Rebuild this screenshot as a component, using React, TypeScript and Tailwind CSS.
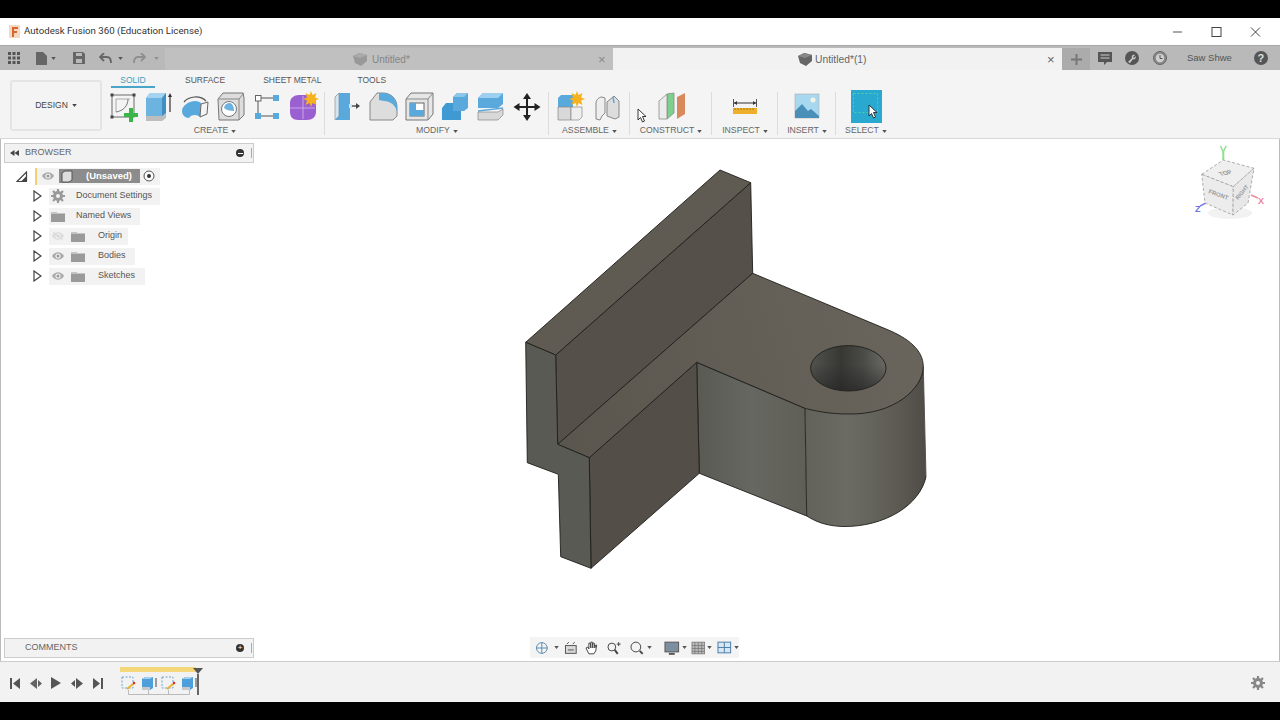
import React from 'react';

const sans = "font-['Liberation_Sans',Arial,sans-serif]";

const Caret = ({ className = 'fill-[#555]' }: { className?: string }) => (
  <svg width="5" height="3" viewBox="0 0 6 4" className={className}>
    <path d="M0 0h6L3 4z" />
  </svg>
);

// 36x36 ribbon icon box
const Ico = ({ children }: { children: React.ReactNode }) => (
  <svg width="36" height="36" viewBox="0 0 36 36" className="shrink-0">
    {children}
  </svg>
);

const SketchIcon = () => (
  <Ico>
    <rect x="7" y="7" width="22" height="22" fill="none" stroke="#777" strokeWidth="1.1" />
    <path d="M11 11v13M11 11h14" stroke="#aaa" fill="none" />
    <path d="M23 11c0 7-5 12-12 13" stroke="#777" fill="none" />
    <g fill="#444">
      <rect x="5.500" y="5.500" width="3" height="3" />
      <rect x="27.500" y="5.500" width="3" height="3" />
      <rect x="5.500" y="27.500" width="3" height="3" />
    </g>
    <path d="M24 20h4v5h5v4h-5v5h-4v-5h-5v-4h5z" fill="#39b54a" />
  </Ico>
);
const ExtrudeIcon = () => (
  <Ico>
    <path d="M5 10l4-5h16v22l-4 4H5z" fill="#6db3e0" />
    <path d="M5 10l4-5h16l-4 5z" fill="#a5d3ef" />
    <path d="M21 10l4-5v22l-4 4z" fill="#3f8fc4" />
    <path d="M5 28h16l4-3v5l-4 3H5z" fill="#bdbdbd" />
    <path d="M29 24V7" stroke="#333" strokeWidth="1.200" />
    <path d="M27 9l2-4 2 4z" fill="#333" />
  </Ico>
);
const RevolveIcon = () => (
  <Ico>
    <path d="M7 14c5-6 16-7 22-1" fill="none" stroke="#555" strokeWidth="1.200" />
    <path d="M5 23c0-6 8-10 13-10 3 0 5 1 6 2l-1 14c-1-1-3-2-5-2-3 0-5 1-6 3-4 0-7-3-7-7z" fill="#5aa9dc" />
    <path d="M24 16l7-2-1 12-7 3z" fill="#f4f4f4" stroke="#666" />
  </Ico>
);
const HoleIcon = () => (
  <Ico>
    <path d="M5 11l5-6h20l1 5v17l-5 5H6z" fill="#ddd" stroke="#777" />
    <path d="M6 11h20l5-6M26 11v21" fill="none" stroke="#888" />
    <circle cx="16" cy="21" r="7.500" fill="#fff" stroke="#777" />
    <path d="M11 20a6 6 0 0 1 6-5c3 1 4 4 4 8-4 0-8-1-10-3z" fill="#6db3e0" />
  </Ico>
);
const PatternIcon = () => (
  <Ico>
    <path d="M12 10h12M9 13v12M12 28h12" stroke="#555" />
    <rect x="6.500" y="7.500" width="5.500" height="5.500" fill="#fff" stroke="#666" />
    <rect x="24" y="7" width="6" height="6" fill="#5aa9dc" />
    <rect x="6" y="25" width="6" height="6" fill="#5aa9dc" />
    <rect x="24" y="25" width="6" height="6" fill="#5aa9dc" />
  </Ico>
);
const FormIcon = () => (
  <Ico>
    <path d="M5 15c0-5 4-8 9-8h8c7 0 9 4 9 10v7c0 5-4 8-9 8h-9c-5 0-8-3-8-8z" fill="#9a5fd0" />
    <path d="M18 8v23M5 20h25" stroke="#c9a8e8" />
    <path d="M26 3l1.500 4 4-2-1.500 4.500 4 1.500-4 1.500 1.500 4.500-4-2-1.500 4-1.500-4-4 2 1.500-4.500-4-1.500 4-1.500-1.500-4.500 4 2z" fill="#f5b21e" />
  </Ico>
);
const PressPullIcon = () => (
  <Ico>
    <path d="M10 5h11v27H7l-1-2V9z" fill="#5aa9dc" />
    <path d="M6 9l4-4v23l-4 4z" fill="#cfe6f5" stroke="#888" strokeWidth="0.600" />
    <path d="M21 18h7" stroke="#555" strokeWidth="1.500" />
    <path d="M27 15l4 3-4 3z" fill="#444" />
    <rect x="20" y="16" width="3" height="4" fill="#cfe6f5" />
  </Ico>
);
const FilletIcon = () => (
  <Ico>
    <path d="M5 14l7-9h6c8 0 14 6 14 14v9l-4 4H5z" fill="#ddd" stroke="#888" />
    <path d="M14 5h4c8 0 14 6 14 14v5c-1-6-6-11-13-11l-5-1z" fill="#5aa9dc" />
  </Ico>
);
const ShellIcon = () => (
  <Ico>
    <path d="M5 11l5-6h22v21l-5 6H5z" fill="#e6e6e6" stroke="#777" />
    <path d="M5 11h22l5-6M27 11v21" fill="none" stroke="#888" />
    <rect x="9" y="15" width="14" height="13" fill="#fff" stroke="#666" />
    <path d="M15 15v7h8v6H9V15z" fill="#5aa9dc" />
  </Ico>
);
const CombineIcon = () => (
  <Ico>
    <path d="M16 9l4-4h11v15l-4 3H16z" fill="#5aa9dc" />
    <path d="M16 9l4-4h11l-4 4z" fill="#8cc6ea" />
    <path d="M5 20l4-5h7v8h8v9H5z" fill="#3f9ad4" />
  </Ico>
);
const OffsetIcon = () => (
  <Ico>
    <path d="M5 10l5-5h20v11l-5 4H5z" fill="#5aa9dc" />
    <path d="M5 10l5-5h20l-5 5z" fill="#9dcff0" />
    <path d="M5 23l25-3" stroke="#5aa9dc" strokeWidth="1.500" />
    <path d="M5 24h20l5-3v6l-5 5H5z" fill="#d8d8d8" stroke="#888" strokeWidth="0.700" />
  </Ico>
);
const MoveIcon = () => (
  <Ico>
    <path d="M18 7v24M6 19h24" stroke="#222" strokeWidth="2" />
    <path d="M18 5l4 6h-8zM18 33l4-6h-8zM4.500 19l6-4v8zM31.500 19l-6-4v8z" fill="#222" />
  </Ico>
);
const AssembleIcon = () => (
  <Ico>
    <path d="M5 10l3-3h12v12H5z" fill="#5aa9dc" />
    <path d="M5 19h13v13H5z" fill="#d8d8d8" stroke="#888" strokeWidth="0.700" />
    <path d="M18 19h11v10l-3 3h-8z" fill="#eee" stroke="#888" strokeWidth="0.700" />
    <path d="M24 3l1.500 4 4-2-1.500 4.500 4 1.500-4 1.500 1.500 4.500-4-2-1.500 4-1.500-4-4 2 1.500-4.500-4-1.500 4-1.500-1.500-4.500 4 2z" fill="#f5b21e" />
  </Ico>
);
const JointIcon = () => (
  <Ico>
    <path d="M7 15c0-3 3-6 6-6l3 1v15l-3 3-2 4-4-1z" fill="#eee" stroke="#888" />
    <path d="M18 14l7-6 5 5v16l-4 2-8-3z" fill="#ddd" stroke="#888" />
    <path d="M24 9l1 6" stroke="#5aa9dc" strokeWidth="1.500" />
  </Ico>
);
const ConstructIcon = () => (
  <Ico>
    <path d="M14 6l7-1v20l-7 6z" fill="#7ed08c" stroke="#8a8a8a" strokeWidth="0.800" />
    <path d="M6 13l8-7v25H6z" fill="#ececec" stroke="#8a8a8a" strokeWidth="0.800" />
    <path d="M24 9l8-4v21l-8 5z" fill="#d98a5c" />
  </Ico>
);
const InspectIcon = () => (
  <Ico>
    <path d="M7 15h22" stroke="#333" />
    <path d="M6.500 11v8M29.500 11v8" stroke="#555" />
    <path d="M7 15l3-2v4zM29 15l-3-2v4z" fill="#333" />
    <rect x="6" y="20" width="24" height="6" fill="#eeb02a" />
    <path d="M8 20v2M11 20v2M14 20v2M17 20v2M20 20v2M23 20v2M26 20v2" stroke="#8a6a10" strokeWidth="0.700" />
  </Ico>
);
const InsertIcon = () => (
  <Ico>
    <rect x="6" y="6" width="24" height="24" fill="#a8d7f0" stroke="#aaa" strokeWidth="0.600" />
    <circle cx="24" cy="12" r="2.500" fill="#f4f4e4" />
    <path d="M6 30v-7l7-7 6 7 3-2 8 7v2z" fill="#4a8fb8" />
  </Ico>
);
const SelectIcon = () => (
  <Ico>
    <rect x="3" y="2" width="31" height="33" fill="#29a9cf" />
    <rect x="5.500" y="5.500" width="24" height="19" fill="none" stroke="#4ccfa8" strokeDasharray="2 2" />
  </Ico>
);

const Cursor = ({ className, fill = '#fff' }: { className: string; fill?: string }) => (
  <svg width="11" height="15" viewBox="0 0 11 15" className={className}>
    <path d="M1 1v11l2.500-2.500 2 4.500 2-1-2-4.500H9z" fill={fill} stroke="#222" strokeWidth="0.900" />
  </svg>
);

const Group = ({
  width,
  label,
  start,
  children,
}: {
  width: string;
  label: string;
  start?: string;
  children: React.ReactNode;
}) => (
  <div className={`flex flex-col ${width} relative`}>
    <div className={`flex h-[36px] ${start ?? 'justify-center'}`}>{children}</div>
    <div className="flex items-center justify-center gap-[3px] h-[14px] text-[8.700px] text-[#666]">
      {label}
      <Caret />
    </div>
    <div className="absolute right-0 top-[4px] h-[43px] w-px bg-[#dcdcdc]" />
  </div>
);

const Eye = ({ faded }: { faded?: boolean }) => (
  <svg width="14" height="10" viewBox="0 0 14 10" className={faded ? 'opacity-30' : ''}>
    <path d="M1 5c3-5 9-5 12 0-3 5-9 5-12 0z" fill="#aaa" />
    <circle cx="7" cy="5" r="2.600" fill="#f2f2f2" />
    <circle cx="7" cy="5" r="1.500" fill="#999" />
    {faded && <path d="M2 1l10 8" stroke="#999" />}
  </svg>
);
const Folder = () => (
  <svg width="14" height="11" viewBox="0 0 14 11">
    <path d="M0 1h5l1 1h8v9H0z" fill="#9a9a9a" />
    <path d="M0 1h5l1 1h8v1H0z" fill="#c4c4c4" />
  </svg>
);
const Gear = ({ color = '#999', size = 14 }: { color?: string; size?: number }) => (
  <svg width={size} height={size} viewBox="0 0 14 14">
    <circle cx="7" cy="7" r="3.500" fill="none" stroke={color} strokeWidth="3" />
    <path d="M7 0v3M7 11v3M0 7h3M11 7h3M2 2l2 2M10 10l2 2M12 2l-2 2M2 12l2-2" stroke={color} strokeWidth="2.200" />
  </svg>
);
const Expander = () => (
  <svg width="9" height="12" viewBox="0 0 9 12" className="shrink-0">
    <path d="M1 1l7 5-7 5z" fill="#fff" stroke="#444" strokeWidth="1.200" />
  </svg>
);

const TreeRow = ({ icon, eye, faded, label, w }: { icon: React.ReactNode; eye?: boolean; faded?: boolean; label: string; w: string }) => (
  <div className="flex items-center h-[20px] pl-[29px]">
    <Expander />
    <div className={`ml-[7px] flex items-center h-[17px] bg-[#f2f2f2] pl-[2px] ${w}`}>
      {eye && (
        <span className="w-[14px] flex justify-center">
          <Eye faded={faded} />
        </span>
      )}
      <span className={`flex justify-center ${eye ? 'w-[26px]' : 'w-[14px]'}`}>{icon}</span>
      <span className={`${eye ? 'ml-[7px]' : 'ml-[11px]'} text-[9px] text-[#555]`}>{label}</span>
    </div>
  </div>
);

const Model = () => (
  <svg width="420" height="420" viewBox="515 160 420 420" className="block">
    <defs>
      <linearGradient id="cyl" x1="805" x2="926" y1="0" y2="0" gradientUnits="userSpaceOnUse">
        <stop offset="0" stopColor="#62625b" />
        <stop offset="0.35" stopColor="#6b6b64" />
        <stop offset="0.75" stopColor="#5d5b54" />
        <stop offset="1" stopColor="#4f4c47" />
      </linearGradient>
      <linearGradient id="side" x1="697" x2="806" y1="0" y2="0" gradientUnits="userSpaceOnUse">
        <stop offset="0" stopColor="#5a5a54" />
        <stop offset="0.5" stopColor="#676761" />
        <stop offset="1" stopColor="#5f5f58" />
      </linearGradient>
      <linearGradient id="hole" x1="811" x2="886" y1="0" y2="0" gradientUnits="userSpaceOnUse">
        <stop offset="0" stopColor="#52524e" />
        <stop offset="0.4" stopColor="#373734" />
        <stop offset="0.7" stopColor="#4a4a46" />
        <stop offset="1" stopColor="#6b6b66" />
      </linearGradient>
      <linearGradient id="holeShade" x1="0" x2="0" y1="346" y2="391" gradientUnits="userSpaceOnUse">
        <stop offset="0.4" stopColor="#222" stopOpacity="0" />
        <stop offset="1" stopColor="#222" stopOpacity="0.6" />
      </linearGradient>
      <linearGradient id="plate" x1="560" x2="920" y1="450" y2="340" gradientUnits="userSpaceOnUse">
        <stop offset="0" stopColor="#5a554d" />
        <stop offset="1" stopColor="#69645c" />
      </linearGradient>
    </defs>
    <g stroke="#1e1e1a" strokeWidth="0.900" strokeLinejoin="round">
      {/* cylinder side and lower side wall */}
      <path d="M805 408.300C850 418 905 408 923.300 366.700L926 476.700C920 505 885 527 843 526.500C825 526 815 521 806.700 516z" fill="url(#cyl)" stroke="none" />
      <path d="M923.300 366.700L926 476.700" fill="none" stroke="#4f4c47" />
      <path d="M926 476.700C920 505 885 527 843 526.500C825 526 815 521 806.700 516" fill="none" />
      <path d="M696.700 362.300L805 408.300L806.700 516L699.300 473.300z" fill="url(#side)" />
      {/* flange front */}
      <path d="M589.300 457.700L696.700 362.300L699.300 473.300L591 568.300z" fill="#534e48" />
      {/* rib front */}
      <path d="M555.700 355L750.700 182.700L752.700 273.300L557.700 444.300z" fill="#55504a" />
      {/* rib top */}
      <path d="M720 170L750.700 182.700L555.700 355L525.700 342.300z" fill="#5f5a52" />
      {/* flange and plate top */}
      <path d="M557.700 444.300L752.700 273.300L886.700 329.300C908 338 923.300 350 923.300 366.700C923 388 895 415 848 414C830 414 815 411 805 408.300L696.700 362.300L589.300 457.700z" fill="url(#plate)" />
      {/* left end */}
      <path d="M525.700 342.300L555.700 355L557.700 444.300L589.300 457.700L591 568.300L560.700 556.700L558.300 474.300L527.300 462.700z" fill="#5a5a54" />
      <ellipse cx="848.300" cy="368.300" rx="37.700" ry="22.700" fill="url(#hole)" />
      <ellipse cx="848.300" cy="368.300" rx="37.700" ry="22.700" fill="url(#holeShade)" stroke="none" />
    </g>
  </svg>
);

const ViewCube = () => (
  <svg width="80" height="85" viewBox="1190 140 80 85" className="block">
    <ellipse cx="1230" cy="213" rx="22" ry="6" fill="#f2f2f2" />
    <path d="M1223.300 160V152" stroke="#8fe08f" strokeWidth="2" />
    <path d="M1220.500 146l2.800 6 2.800-6" stroke="#8fe08f" strokeWidth="1.500" fill="none" />
    <path d="M1251 195l7 3" stroke="#f08aa0" strokeWidth="1.500" />
    <text x="1258" y="204" fontSize="9" fontWeight="bold" fill="#ee7f98" fontFamily="Liberation Sans">X</text>
    <path d="M1206 203l-6 3" stroke="#8080e8" strokeWidth="1.500" />
    <text x="1195" y="212" fontSize="9" fontWeight="bold" fill="#7070e0" fontFamily="Liberation Sans">Z</text>
    <path d="M1201.700 174.300L1223.300 160L1254 168.300L1233.300 186.700z" fill="#efefef" stroke="#999" strokeDasharray="3 2" strokeWidth="0.800" />
    <path d="M1201.700 174.300L1233.300 186.700L1233 215L1205 203z" fill="#ececec" stroke="#999" strokeDasharray="3 2" strokeWidth="0.800" />
    <path d="M1233.300 186.700L1254 168.300L1248 203L1233 215z" fill="#e8e8e8" stroke="#999" strokeDasharray="3 2" strokeWidth="0.800" />
    <text fontSize="6" fontWeight="bold" fill="#999" fontFamily="Liberation Sans" transform="translate(1221 176) rotate(-12) skewX(30)">TOP</text>
    <text fontSize="6" fontWeight="bold" fill="#999" fontFamily="Liberation Sans" transform="translate(1208 193) rotate(20)">FRONT</text>
    <text fontSize="5.500" fontWeight="bold" fill="#999" fontFamily="Liberation Sans" transform="translate(1238 200) rotate(-50)">RIGHT</text>
  </svg>
);

const SmallTimelineIcon = ({ kind }: { kind: 'sketch' | 'extrude' }) =>
  kind === 'sketch' ? (
    <svg width="20" height="20" viewBox="0 0 20 20">
      <rect x="3" y="4" width="11" height="11" fill="none" stroke="#6aa6d0" strokeDasharray="2 1.500" />
      <path d="M8 16l6-5" stroke="#eeb02a" strokeWidth="2" />
      <circle cx="15" cy="10" r="1.300" fill="#d03030" />
    </svg>
  ) : (
    <svg width="20" height="20" viewBox="0 0 20 20">
      <path d="M3 6l3-2h8v11l-3 2H3z" fill="#4c9fdb" />
      <path d="M3 6l3-2h8l-3 2z" fill="#9fd0f0" />
      <path d="M3 14h8v3H3z" fill="#c8c8c8" />
      <path d="M17 14V5" stroke="#444" />
    </svg>
  );

export default function App() {
  return (
    <div className={`w-[1280px] h-[720px] bg-black flex flex-col overflow-hidden ${sans}`}>
      <div className="h-[18px] shrink-0" />

      {/* title bar */}
      <div className="h-[27px] shrink-0 bg-white flex items-center pl-[9px]">
        <svg width="11" height="13" viewBox="0 0 11 13">
          <rect width="11" height="13" rx="1" fill="#f3d9c4" />
          <path d="M3 2h6v2H5v2h3v2H5v4H3z" fill="#d9662b" />
        </svg>
        <span className="ml-[4px] text-[9.700px] text-[#333] font-['Roboto',sans-serif]">
          Autodesk Fusion 360 (Education License)
        </span>
        <div className="ml-auto flex items-center">
          <svg width="39" height="12" viewBox="0 0 39 12"><path d="M15 6h9" stroke="#555" /></svg>
          <svg width="39" height="12" viewBox="0 0 39 12"><rect x="15" y="1.500" width="9" height="9" fill="none" stroke="#444" /></svg>
          <svg width="39" height="12" viewBox="0 0 39 12" className="mr-[5px]"><path d="M15 1.500l9 9M24 1.500l-9 9" stroke="#444" /></svg>
        </div>
      </div>

      {/* tab bar */}
      <div className="h-[25px] shrink-0 bg-[#b9b9b9] flex items-stretch border-t border-[#a8a8a8]">
        <div className="w-[165px] shrink-0 flex items-center pl-[8px]">
          <svg width="12" height="12" viewBox="0 0 12 12" className="fill-[#555]">
            <path d="M0 0h3v3H0zM4.500 0h3v3h-3zM9 0h3v3H9zM0 4.500h3v3H0zM4.500 4.500h3v3h-3zM9 4.500h3v3H9zM0 9h3v3H0zM4.500 9h3v3h-3zM9 9h3v3H9z" />
          </svg>
          <svg width="11" height="13" viewBox="0 0 11 13" className="ml-[16px] fill-[#666]"><path d="M0 0h7l4 4v9H0z" /></svg>
          <span className="ml-[4px]"><Caret /></span>
          <svg width="12" height="12" viewBox="0 0 12 12" className="ml-[17px]">
            <path d="M0 0h10l2 2v10H0z" fill="#666" />
            <rect x="3" y="1" width="6" height="3" fill="#b9b9b9" />
            <rect x="3" y="7" width="6" height="4" fill="#b9b9b9" />
          </svg>
          <svg width="13" height="11" viewBox="0 0 13 11" className="ml-[14px]" fill="none">
            <path d="M1 4h7c3 0 4 2 4 6" stroke="#666" strokeWidth="1.800" />
            <path d="M5 0L1 4l4 4" stroke="#666" strokeWidth="1.800" />
          </svg>
          <span className="ml-[6px]"><Caret /></span>
          <svg width="13" height="11" viewBox="0 0 13 11" className="ml-[10px]" fill="none">
            <path d="M12 4H5C2 4 1 6 1 10" stroke="#8e8e8e" strokeWidth="1.800" />
            <path d="M8 0l4 4-4 4" stroke="#8e8e8e" strokeWidth="1.800" />
          </svg>
          <span className="ml-[8px]"><Caret className="fill-[#8e8e8e]" /></span>
        </div>

        <div className="w-[448px] shrink-0 bg-[#c0c0c0] mt-[2px] flex items-center relative">
          <div className="absolute left-[188px] flex items-center gap-[1px]">
            <svg width="14" height="13" viewBox="0 0 14 13"><path d="M0 3l6-3 8 2v6l-6 5-6-3z" fill="#999" /><path d="M0 3l7 2 7-3-7-2z" fill="#aaa" /></svg>
            <span className="ml-[4px] pt-px text-[10px] text-[#858585]">Untitled*</span>
          </div>
          <span className="absolute left-[433px] text-[13px] leading-none text-[#888]">×</span>
        </div>

        <div className="w-[449px] shrink-0 bg-[#f2f2f2] mt-[2px] flex items-center relative">
          <div className="absolute left-[185px] flex items-center gap-[1px]">
            <svg width="14" height="13" viewBox="0 0 14 13"><path d="M0 3l6-3 8 2v6l-6 5-6-3z" fill="#666" /><path d="M0 3l7 2 7-3-7-2z" fill="#888" /></svg>
            <span className="ml-[2px] pt-px text-[10.300px] text-[#666]">Untitled*(1)</span>
          </div>
          <span className="absolute left-[434px] text-[13px] leading-none text-[#666]">×</span>
        </div>

        <div className="w-[28px] shrink-0 bg-[#ababab] mt-[2px] flex items-center justify-center">
          <svg width="11" height="11" viewBox="0 0 11 11"><path d="M5.500 0v11M0 5.500h11" stroke="#777" strokeWidth="2" /></svg>
        </div>

        <div className="flex-1 flex items-center">
          <svg width="14" height="13" viewBox="0 0 14 13" className="ml-[8px]">
            <path d="M0 0h14v10H9l-3 3v-3H0z" fill="#555" />
            <path d="M2.500 3h9M2.500 6h9" stroke="#ccc" />
          </svg>
          <svg width="14" height="14" viewBox="0 0 14 14" className="ml-[13px]">
            <circle cx="7" cy="7" r="7" fill="#555" />
            <path d="M3 11l4-4c-1-2 1-4 3-3L8 6l1 1 2-2c0 3-2 4-3 3l-3 4z" fill="#ccc" />
          </svg>
          <svg width="14" height="14" viewBox="0 0 14 14" className="ml-[14px]">
            <circle cx="7" cy="7" r="6.500" fill="#8a8a8a" stroke="#666" />
            <circle cx="7" cy="7" r="4.200" fill="#d0d0d0" />
            <path d="M7 4v3.500h2.500" stroke="#555" fill="none" />
          </svg>
          <span className="ml-[20px] text-[9.500px] text-[#555]">Saw Shwe</span>
          <span className="ml-[22px] w-[14px] h-[14px] rounded-full bg-[#555] text-[#ddd] text-[11px] font-bold leading-[14px] text-center">?</span>
        </div>
      </div>

      {/* ribbon */}
      <div className="h-[69px] shrink-0 bg-[#f4f4f4] border-b border-[#d8d8d8] flex">
        <div className="pl-[10px] pt-[10px] w-[105px] shrink-0">
          <div className="w-[92px] h-[51px] border-2 border-[#e4e4e4] rounded-[3px] flex items-center justify-center gap-[4px] text-[8.500px] text-[#444]">
            DESIGN
            <Caret className="fill-[#444]" />
          </div>
        </div>
        <div className="flex flex-col">
          <div className="h-[18px] flex text-[8.500px] text-[#555] relative">
            <span className="w-[50px] text-center text-[#3f9dc0] pl-[6px] pt-[4px] h-[18px] relative">
              SOLID
              <span className="absolute left-[6px] bottom-0 h-[2px] w-[44px] bg-[#4aa6c8]" />
            </span>
            <span className="ml-[30px] pt-[4px]">SURFACE</span>
            <span className="ml-[38px] pt-[4px]">SHEET METAL</span>
            <span className="ml-[36px] pt-[4px]">TOOLS</span>
          </div>
          <div className="flex">
            <Group width="w-[220px]" label="CREATE" start="justify-start">
              <SketchIcon />
              <ExtrudeIcon />
              <RevolveIcon />
              <HoleIcon />
              <PatternIcon />
              <FormIcon />
            </Group>
            <Group width="w-[224px]" label="MODIFY" start="justify-start pl-[4px]">
              <PressPullIcon />
              <FilletIcon />
              <ShellIcon />
              <CombineIcon />
              <OffsetIcon />
              <MoveIcon />
            </Group>
            <Group width="w-[81px]" label="ASSEMBLE" start="justify-start pl-[4px]">
              <AssembleIcon />
              <JointIcon />
            </Group>
            <Group width="w-[82px]" label="CONSTRUCT">
              <ConstructIcon />
            </Group>
            <Group width="w-[66px]" label="INSPECT">
              <InspectIcon />
            </Group>
            <Group width="w-[58px]" label="INSERT">
              <InsertIcon />
            </Group>
            <div className="flex flex-col w-[60px] relative">
              <div className="flex h-[36px] justify-center">
                <SelectIcon />
              </div>
              <div className="flex items-center justify-center gap-[3px] h-[14px] text-[8.700px] text-[#666]">
                SELECT
                <Caret />
              </div>
              <Cursor className="absolute left-[32px] top-[16px]" />
            </div>
          </div>
        </div>
      </div>

      {/* canvas */}
      <div className="flex-1 min-h-0 bg-white relative flex border-x border-[#bbb]">
        <div className="w-[253px] shrink-0 flex flex-col pl-[3px] pt-[4px] pb-[3px]">
          <div className="h-[20px] bg-[#f2f2f2] border border-[#ccc] flex items-center text-[9px] text-[#666]">
            <svg width="9" height="6" viewBox="0 0 9 6" className="ml-[5px] fill-[#444]"><path d="M4.500 0v6L0 3zM9 0v6L4.500 3z" /></svg>
            <span className="ml-[6px]">BROWSER</span>
            <span className="ml-auto mr-[7px] w-[8px] h-[8px] rounded-full bg-[#333] flex items-center justify-center">
              <span className="w-[5px] h-px bg-white" />
            </span>
            <span className="w-px h-[10px] bg-[#aaa] mr-[1px]" />
          </div>
          <div className="flex items-center h-[20px] mt-[3px] pl-[12px]">
            <svg width="12" height="11" viewBox="0 0 12 11" className="shrink-0"><path d="M1 10.500L10.500 1v9.500z" fill="#fff" stroke="#444" strokeWidth="1.200" /><path d="M5 10.500L10.500 5v5.500z" fill="#444" /></svg>
            <div className="ml-[7px] flex items-center h-[17px] w-[125px] bg-[#f2f2f2] border-l-2 border-[#f3cf6f]">
              <span className="w-[22px] flex justify-center"><Eye /></span>
              <div className="w-[81px] h-[14px] bg-[#8c8c8c] flex items-center">
                <svg width="13" height="13" viewBox="0 0 13 13" className="ml-[1px]"><path d="M2 3l3-2h7v9l-3 2H2z" fill="#ddd" stroke="#555" /></svg>
                <span className="ml-[13px] text-[9.500px] font-bold text-white">(Unsaved)</span>
              </div>
              <svg width="12" height="12" viewBox="0 0 12 12" className="ml-[3px]"><circle cx="6" cy="6" r="5" fill="#fff" stroke="#555" /><circle cx="6" cy="6" r="2" fill="#333" /></svg>
            </div>
          </div>
          <TreeRow icon={<Gear />} label="Document Settings" w="w-[111px]" />
          <TreeRow icon={<Folder />} label="Named Views" w="w-[91px]" />
          <TreeRow icon={<Folder />} eye faded label="Origin" w="w-[79px]" />
          <TreeRow icon={<Folder />} eye label="Bodies" w="w-[86px]" />
          <TreeRow icon={<Folder />} eye label="Sketches" w="w-[96px]" />

          <div className="mt-auto h-[20px] bg-[#f2f2f2] border border-[#ccc] flex items-center text-[9px] text-[#666]">
            <span className="ml-[20px]">COMMENTS</span>
            <span className="ml-auto mr-[7px] w-[8px] h-[8px] rounded-full bg-[#333] flex items-center justify-center text-white text-[8px] leading-none">+</span>
            <span className="w-px h-[10px] bg-[#aaa] mr-[1px]" />
          </div>
        </div>

        <div className="flex-1 relative">
          <div className="absolute left-[261px] top-[21px]">
            <Model />
          </div>
          <div className="absolute right-[9px] top-[1px]">
            <ViewCube />
          </div>

          {/* nav bar */}
          <div className="absolute left-[276px] bottom-[3px] h-[21px] w-[209px] bg-[#f4f4f4] flex items-center pl-[5px]">
            <svg width="16" height="14" viewBox="0 0 16 14" fill="none" stroke="#5a8db0"><circle cx="7" cy="7" r="5.500" /><path d="M1 7h12M7 1v12" /></svg>
            <span className="ml-[3px]"><Caret /></span>
            <svg width="14" height="13" viewBox="0 0 14 13" className="ml-[5px]" fill="none" stroke="#555"><rect x="1.500" y="4.500" width="11" height="8" fill="#d8d8d8" /><path d="M4 9h6M3 3l2-2M9 3l2-2" /></svg>
            <svg width="14" height="14" viewBox="0 0 14 14" className="ml-[8px]" fill="#fff" stroke="#444"><path d="M4 13L1 7l2-1 1 2V2l1.500 0 .5 5V1h1.500l.5 6V2h1.500l.5 5 1-3h1l-1 6-2 3z" /></svg>
            <svg width="15" height="14" viewBox="0 0 15 14" className="ml-[7px]" fill="none" stroke="#444"><circle cx="6" cy="6" r="4" /><path d="M9 9l3 4" strokeWidth="2" /><path d="M13 1v4M11 3h4" /></svg>
            <svg width="15" height="14" viewBox="0 0 15 14" className="ml-[9px]" fill="none" stroke="#444"><circle cx="6" cy="6" r="5" /><path d="M10 10l3 3" strokeWidth="2" /></svg>
            <span className="ml-[3px]"><Caret /></span>
            <svg width="16" height="14" viewBox="0 0 16 14" className="ml-[12px]"><rect x="1" y="1" width="14" height="10" fill="#7d8f9e" stroke="#555" /><path d="M5 13h6" stroke="#555" strokeWidth="2" /></svg>
            <span className="ml-[2px]"><Caret /></span>
            <svg width="15" height="14" viewBox="0 0 15 14" className="ml-[4px]" fill="none" stroke="#777" strokeWidth="0.800"><rect x="1" y="1" width="13" height="12" fill="#bbb" /><path d="M4 1v12M7.500 1v12M11 1v12M1 4.500h13M1 7.500h13M1 10.500h13" /></svg>
            <span className="ml-[2px]"><Caret /></span>
            <svg width="15" height="13" viewBox="0 0 15 13" className="ml-[5px]" fill="#d6e6f2" stroke="#4a7ea8"><rect x="1" y="1" width="13" height="11" /><path d="M7.500 1v11M1 6.500h13" /></svg>
            <span className="ml-[2px]"><Caret /></span>
          </div>
        </div>

        <Cursor className="absolute left-[636px] top-[-31px]" />
      </div>

      {/* timeline */}
      <div className="h-[41px] shrink-0 bg-[#f2f2f2] border-t border-[#ccc] flex items-center pl-[10px] pr-[15px] pt-[2px]">
        <svg width="10" height="11" viewBox="0 0 10 11" className="fill-[#555]"><path d="M0 0h2v11H0zM10 0v11L3 5.500z" /></svg>
        <svg width="12" height="11" viewBox="0 0 12 11" className="ml-[10px] fill-[#555]"><path d="M0 5.500L7 0v11zM8 2l4 3.500L8 9z" opacity="0.900" /></svg>
        <svg width="10" height="12" viewBox="0 0 10 12" className="ml-[9px] fill-[#555]"><path d="M0 0l10 6-10 6z" /></svg>
        <svg width="12" height="11" viewBox="0 0 12 11" className="ml-[10px] fill-[#555]"><path d="M12 5.500L5 0v11zM4 2L0 5.500 4 9z" /></svg>
        <svg width="10" height="11" viewBox="0 0 10 11" className="ml-[10px] fill-[#555]"><path d="M10 0H8v11h2zM0 0v11l7-5.500z" /></svg>

        <div className="ml-[17px] relative w-[84px] h-[36px] flex items-center">
          <div className="absolute left-0 top-[2px] h-[5px] w-[76px] bg-[#f3d778]" />
          <div className="absolute left-[73px] top-[3px] flex flex-col items-center">
            <svg width="10" height="6" viewBox="0 0 10 6" className="fill-[#555]"><path d="M0 0h10L5 6z" /></svg>
            <div className="w-[2px] h-[21px] bg-[#666]" />
          </div>
          <div className="flex -ml-px">
            <SmallTimelineIcon kind="sketch" />
            <SmallTimelineIcon kind="extrude" />
            <SmallTimelineIcon kind="sketch" />
            <SmallTimelineIcon kind="extrude" />
          </div>
          <svg width="64" height="6" viewBox="0 0 64 6" className="absolute left-[8px] top-[25px]" fill="none" stroke="#bbb">
            <path d="M0.500 0v4.500h61V0M20.500 0v4.500M40.500 0v4.500" />
          </svg>
        </div>
        <span className="ml-auto"><Gear color="#888" /></span>
      </div>

      <div className="h-[18px] shrink-0" />
    </div>
  );
}
